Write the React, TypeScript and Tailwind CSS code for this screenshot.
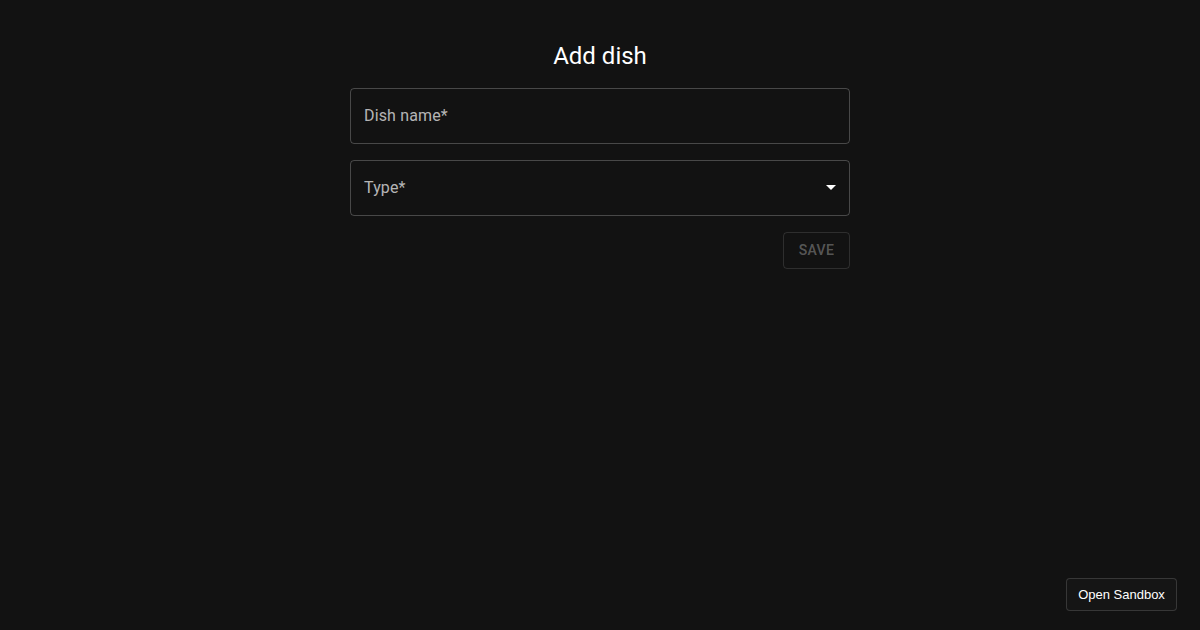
import React from "react";

export default function App() {
  return (
    <div
      className="relative w-full h-[630px] bg-[#121212] text-white overflow-hidden"
      style={{ fontFamily: "Roboto, 'Helvetica Neue', Arial, sans-serif" }}
    >
      <div className="w-[500px] mx-auto pt-[40px] flex flex-col">
        <h5 className="text-[24px] leading-[32px] font-normal text-center text-white">
          Add dish
        </h5>
        <div className="mt-4 h-[56px] rounded-[4px] border border-[rgba(255,255,255,0.23)] flex items-center px-[13px] pb-[2px]">
          <span className="text-[16px] leading-[23px] text-[rgba(255,255,255,0.7)] tracking-[0.00938em]">
            Dish name*
          </span>
        </div>
        <div className="mt-4 h-[56px] rounded-[4px] border border-[rgba(255,255,255,0.23)] flex items-center pl-[13px] pr-[6px] pb-[2px] justify-between">
          <span className="text-[16px] leading-[23px] text-[rgba(255,255,255,0.7)] tracking-[0.00938em]">
            Type*
          </span>
          <svg width="24" height="24" viewBox="0 0 24 24" fill="white">
            <path d="M7 10l5 5 5-5z" />
          </svg>
        </div>
        <div className="mt-4 flex justify-end">
          <div className="h-[37px] w-[67px] justify-center rounded-[4px] border border-[rgba(255,255,255,0.12)] flex items-center text-[14px] font-medium uppercase tracking-[0.02857em] text-[rgba(255,255,255,0.3)]">
            Save
          </div>
        </div>
      </div>
      <div
        className="absolute right-[23px] bottom-[19px] h-[33px] w-[111px] justify-center rounded-[4px] border border-[rgba(255,255,255,0.15)] bg-[#151515] flex items-center text-[13px] text-white"
        style={{ fontFamily: "'Liberation Sans', Arial, sans-serif" }}
      >
        Open Sandbox
      </div>
    </div>
  );
}
